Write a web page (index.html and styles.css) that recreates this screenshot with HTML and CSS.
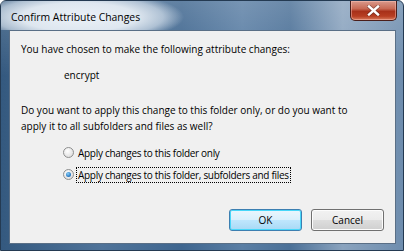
FILE: index.html
```html
<!DOCTYPE html>
<html>
<head>
<meta charset="utf-8">
<link rel="stylesheet" href="styles.css">
</head>
<body>
<div class="window">
  <div class="titlebar">
    <span class="title">Confirm Attribute Changes</span>
    <span class="close"><svg width="13" height="11" viewBox="0 0 13 11"><path d="M2 1.5 L11 9.5 M11 1.5 L2 9.5" stroke="#3a1a1a" stroke-width="3.8" stroke-linecap="square" opacity="0.45"/><path d="M2 1.5 L11 9.5 M11 1.5 L2 9.5" stroke="#ffffff" stroke-width="2.4" stroke-linecap="square"/></svg></span>
  </div>
  <div class="panel">
    <p class="line first">You have chosen to make the following attribute changes:</p>
    <p class="line attr">encrypt</p>
    <p class="line q">Do you want to apply this change to this folder only, or do you want to<br>apply it to all subfolders and files as well?</p>
    <div class="options">
      <div class="opt"><span class="radio"></span><span class="lbl">Apply changes to this folder only</span></div>
      <div class="opt"><span class="radio on"></span><span class="lbl focus">Apply changes to this folder, subfolders and files</span></div>
    </div>
    <div class="buttons">
      <span class="btn def">OK</span>
      <span class="btn">Cancel</span>
    </div>
  </div>
</div>
</body>
</html>
```
FILE: styles.css
```css
html, body { margin: 0; padding: 0; }
body { width: 404px; height: 251px; overflow: hidden; font-family: "Open Sans", "Noto Sans", sans-serif; font-size: 10px; color: #000; }
.window {
  width: 404px; height: 251px; box-sizing: border-box;
  border: 1px solid #243a52;
  border-radius: 6px 6px 0 0;
  background:
    linear-gradient(180deg, rgba(255,255,255,0.18) 0%, rgba(255,255,255,0) 30%),
    linear-gradient(90deg, #34597f 0%, #4f7399 25%, #3f668f 45%, #5a7ea4 60%, #4b7097 72%, #8aa3be 85%, #6e8dae 100%);
  display: flex; flex-direction: column;
}
.titlebar {
  height: 29px; display: flex; align-items: flex-start;
  background: radial-gradient(ellipse 105px 26px at 78px 16px, rgba(235,241,247,1) 0%, rgba(226,234,242,0.97) 55%, rgba(210,222,234,0.7) 80%, rgba(200,215,230,0) 100%);
}
.title { margin: 9px 0 0 10px; font-size: 10.4px; color: #000; }
.close {
  margin-left: auto; margin-right: 6px;
  width: 47px; height: 20px; box-sizing: border-box;
  border: 1px solid #4a1e1a; border-top: none;
  border-radius: 0 0 5px 5px;
  background: linear-gradient(#d99a8c 0%, #c86a55 40%, #a8311a 55%, #b73e22 80%, #d77a5c 100%);
  box-shadow: inset 0 0 0 1px rgba(255,200,190,0.45);
  display: flex; align-items: center; justify-content: center;
}
.panel {
  flex: 1; margin: 0 7px 6px 8px;
  border: 1px solid #5a6f86;
  background: #f0f0f0;
  padding: 0 0 0 11px;
  display: flex; flex-direction: column;
}
.line { margin: 0; line-height: 15px; }
.first { margin-top: 11px; }
.attr { margin: 11px 0 0 43px; }
.q { margin-top: 19px; line-height: 16px; }
.options { margin: 11px 0 0 42px; display: flex; flex-direction: column; gap: 7px; }
.opt { display: flex; align-items: center; height: 15px; }
.radio {
  width: 11px; height: 11px; border-radius: 50%; box-sizing: border-box;
  border: 1px solid #8e8f8f;
  background: radial-gradient(circle at 40% 35%, #ffffff 0%, #eaeaea 50%, #d5d5d5 100%);
  margin-right: 2px; position: relative;
}
.radio.on::after {
  content: ""; position: absolute; left: 2px; top: 2px; width: 5px; height: 5px; border-radius: 50%;
  background: radial-gradient(circle at 40% 35%, #8fd0f5 0%, #2b7fc9 60%, #154a8f 100%);
}
.lbl { padding: 0 1px; line-height: 14px; border: 1px dotted transparent; letter-spacing: -0.3px; }
.lbl.focus { border-color: #000; }
.buttons { margin: 27px 11px 0 0; display: flex; justify-content: flex-end; gap: 9px; }
.btn {
  width: 73px; height: 22px; box-sizing: border-box;
  border: 1px solid #707070; border-radius: 3px;
  background: linear-gradient(#f2f2f2 0%, #ebebeb 48%, #dddddd 52%, #cfcfcf 100%);
  box-shadow: inset 0 0 0 1px #fcfcfc;
  display: flex; align-items: center; justify-content: center;
}
.btn.def {
  border-color: #3c7fb1;
  background: linear-gradient(#eaf6fd 0%, #d9f0fc 48%, #bee6fd 52%, #a7d9f5 100%);
  box-shadow: inset 0 0 0 1px #48d7f9;
}
```
